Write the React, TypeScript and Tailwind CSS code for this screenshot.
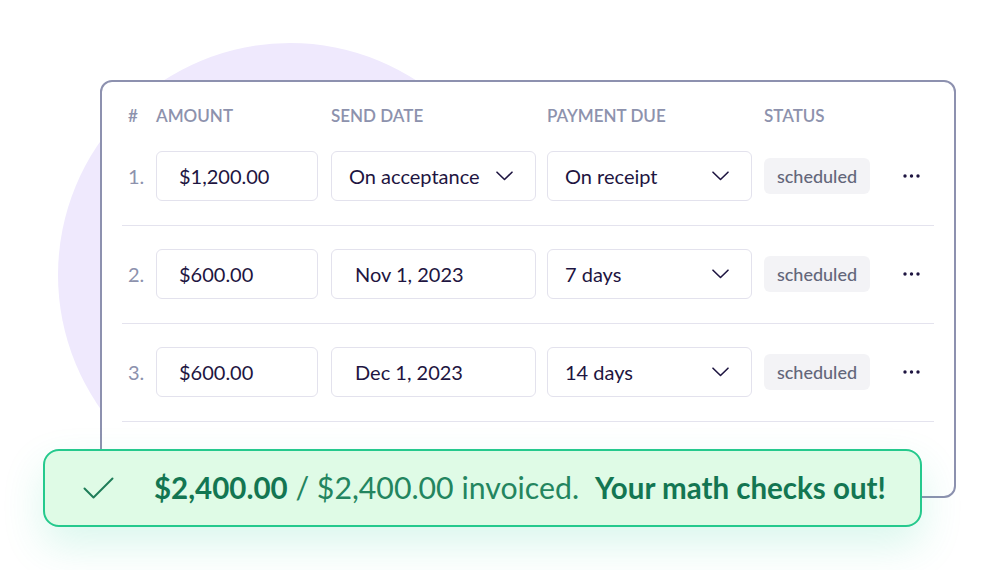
import type { ReactNode } from 'react';

type Row = { n: number; amount: string; send: string; sendSelect: boolean; due: string };

const rows: Row[] = [
  { n: 1, amount: '$1,200.00', send: 'On acceptance', sendSelect: true, due: 'On receipt' },
  { n: 2, amount: '$600.00', send: 'Nov 1, 2023', sendSelect: false, due: '7 days' },
  { n: 3, amount: '$600.00', send: 'Dec 1, 2023', sendSelect: false, due: '14 days' },
];

function Chevron() {
  return (
    <svg width="17" height="10" viewBox="0 0 17 10" fill="none" className="shrink-0">
      <path d="M1 1.2L8.5 8.5L16 1.2" stroke="#1e1541" strokeWidth="1.6" strokeLinecap="round" strokeLinejoin="round" />
    </svg>
  );
}

function Dots() {
  return (
    <svg width="17" height="4" viewBox="0 0 17 4" fill="#1e1541">
      <circle cx="2" cy="2" r="1.7" />
      <circle cx="8.5" cy="2" r="1.7" />
      <circle cx="15" cy="2" r="1.7" />
    </svg>
  );
}

function Box({ className, children }: { className: string; children: ReactNode }) {
  return (
    <div
      className={`h-[50px] flex items-center rounded-[6px] border-[1.5px] border-[#e3e2ed] bg-white text-[20px] text-[#1e1541] ${className}`}
    >
      {children}
    </div>
  );
}

export default function App() {
  return (
    <div className="relative w-[1000px] h-[570px] overflow-hidden bg-white pt-[80px] font-['Lato','Noto_Sans',sans-serif]">
      {/* lavender backdrop */}
      <div className="absolute left-[58px] top-[43px] w-[464px] h-[464px] rounded-full bg-[#efe9fd]" />

      {/* Schedule card */}
      <div className="relative ml-[100px] w-[856px] h-[418px] rounded-[12px] border-2 border-[#8d91af] bg-white px-[20px]">
        <div className="flex items-center pl-[6px] pt-[24px] pb-[2px] text-[17px] leading-[20px] font-semibold uppercase text-[#8d92ad]">
          <span className="w-[28px]">#</span>
          <span className="w-[175px]">Amount</span>
          <span className="w-[216px]">Send date</span>
          <span className="w-[217px]">Payment due</span>
          <span>Status</span>
        </div>

        {rows.map(r => (
          <div key={r.n} className="flex items-center pl-[6px] pt-[23px] pb-[24px] border-b border-[#e4e3ee]">
            <span className="w-[28px] text-[20px] text-[#8d92ad]">{r.n}.</span>
            <Box className="w-[162px] mr-[13px] pl-[22px]">{r.amount}</Box>
            {r.sendSelect ? (
              <Box className="w-[205px] mr-[11px] pl-[17px] pr-[22px] justify-between">
                <span>{r.send}</span>
                <Chevron />
              </Box>
            ) : (
              <Box className="w-[205px] mr-[11px] pl-[23px]">{r.send}</Box>
            )}
            <Box className="w-[205px] mr-[12px] pl-[17px] pr-[22px] justify-between">
              <span>{r.due}</span>
              <Chevron />
            </Box>
            <span className="w-[106px] h-[36px] flex items-center justify-center rounded-[6px] bg-[#f3f3f6] text-[18px] font-medium text-[#63667a]">
              scheduled
            </span>
            <span className="ml-[33px] flex items-center">
              <Dots />
            </span>
          </div>
        ))}
      </div>

      {/* Totals banner */}
      <div className="relative z-10 -mt-[49px] ml-[43px] w-[879px] h-[78px] flex items-center rounded-[16px] border-2 border-[#25c98d] bg-[#dffbe6] pl-[38px] shadow-[0_18px_40px_rgba(52,211,153,0.18)] text-[30.25px] text-[#23855f]">
        <svg width="31" height="22" viewBox="0 0 31 22" fill="none" className="shrink-0">
          <path d="M1.5 11.5L10.5 20.5L29.5 1.5" stroke="#1f7d59" strokeWidth="2" strokeLinecap="round" strokeLinejoin="round" />
        </svg>
        <span className="ml-[40px] whitespace-nowrap">
          <span className="text-[29.5px] font-bold text-[#137652]">$2,400.00</span> / $2,400.00 invoiced.
          <span className="ml-[16px] text-[29.5px] font-bold text-[#137652]">Your math checks out!</span>
        </span>
      </div>
    </div>
  );
}
